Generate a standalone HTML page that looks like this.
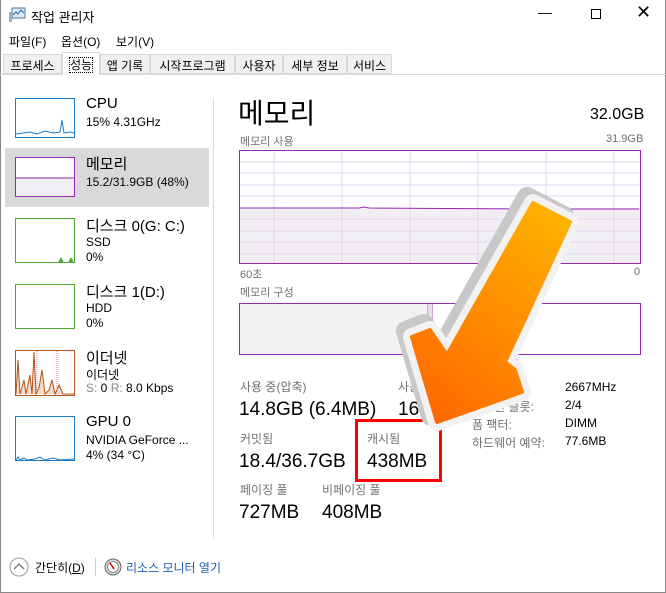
<!DOCTYPE html>
<html><head><meta charset="utf-8"><style>
*{margin:0;padding:0;box-sizing:border-box}
body{width:666px;height:593px;background:#fff;font-family:"Liberation Sans","Noto Sans CJK KR",sans-serif;position:relative;overflow:hidden;color:#000}
.a{position:absolute;white-space:nowrap}
.g{color:#707070;font-size:12px}
.v{font-size:19px}
.tab{position:absolute;top:54px;height:20px;border:1px solid #d9d9d9;background:#f0f0f0;font-size:12px;padding:2px 0;text-align:center;white-space:nowrap;overflow:hidden}
</style></head><body>
<div class="a" style="left:0;top:0;width:666px;height:593px;border:1px solid #888;border-top:none"></div>
<svg class="a" style="left:8px;top:7px" width="18" height="16"><rect x="4" y="1" width="13" height="10" fill="#dde8f3" stroke="#4a7aa6"/><polyline points="5,8 8,5 10,7 13,3 16,6" fill="none" stroke="#1e6fb8"/><rect x="1" y="5" width="3" height="10" fill="#aaa"/></svg>
<div class="a" style="left:31px;top:7px;font-size:13px">작업 관리자</div>
<div class="a" style="left:538px;top:4px;font-size:14px">—</div>
<div class="a" style="left:591px;top:9px;width:10px;height:10px;border:1px solid #000"></div>
<div class="a" style="left:636px;top:2px;font-size:18px">✕</div>
<div class="a" style="left:9px;top:33px;font-size:12px">파일(F)</div>
<div class="a" style="left:61px;top:33px;font-size:12px">옵션(O)</div>
<div class="a" style="left:116px;top:33px;font-size:12px">보기(V)</div>
<div class="a" style="left:0;top:74px;width:666px;border-top:1px solid #d9d9d9"></div>
<div class="tab" style="left:3px;width:59px">프로세스</div>
<div class="tab" style="left:62px;width:38px;top:52px;height:23px;background:#fff;border-bottom:none;padding-top:3px"><span style="outline:1px dotted #000">성능</span></div>
<div class="tab" style="left:100px;width:50px">앱 기록</div>
<div class="tab" style="left:150px;width:85px">시작프로그램</div>
<div class="tab" style="left:235px;width:48px">사용자</div>
<div class="tab" style="left:283px;width:64px">세부 정보</div>
<div class="tab" style="left:347px;width:45px">서비스</div>
<div class="a" style="left:213px;top:98px;height:440px;border-left:1px solid #ddd"></div>
<div class="a" style="left:5px;top:148px;width:204px;height:59px;background:#d9d9d9"></div>
<svg class="a" style="left:15px;top:98px" width="62" height="41"><rect x="0.5" y="0.5" width="59" height="39" fill="#fff" stroke="#1a7bc4"/><polyline points="1,36 8,35 15,34 22,36 30,33 38,35 45,34 47,22 49,35 55,34 59,35" fill="none" stroke="#1a7bc4"/></svg>
<div class="a" style="left:86px;top:95px;font-size:15px">CPU</div>
<div class="a" style="left:86px;top:115px;font-size:12px">15% 4.31GHz</div>
<svg class="a" style="left:15px;top:157px" width="62" height="41"><rect x="0.5" y="0.5" width="59" height="39" fill="#fff" stroke="#9528b4"/><rect x="1" y="21" width="58" height="18" fill="#f1eef4"/><line x1="1" y1="21" x2="59" y2="21" stroke="#9528b4"/></svg>
<div class="a" style="left:86px;top:153px;font-size:15px">메모리</div>
<div class="a" style="left:86px;top:175px;font-size:12px">15.2/31.9GB (48%)</div>
<svg class="a" style="left:15px;top:218px" width="62" height="46"><rect x="0.5" y="0.5" width="59" height="44" fill="#fff" stroke="#4ea72e"/><path d="M44,44 l2,-4 2,4 M54,44 l2,-4 2,4" fill="#4ea72e" stroke="#4ea72e"/></svg>
<div class="a" style="left:86px;top:215px;font-size:15px">디스크 0(G: C:)</div>
<div class="a" style="left:86px;top:235px;font-size:12px">SSD</div>
<div class="a" style="left:86px;top:250px;font-size:12px">0%</div>
<div class="a" style="left:15px;top:284px;width:60px;height:45px;border:1px solid #4ea72e"></div>
<div class="a" style="left:86px;top:281px;font-size:15px">디스크 1(D:)</div>
<div class="a" style="left:86px;top:301px;font-size:12px">HDD</div>
<div class="a" style="left:86px;top:316px;font-size:12px">0%</div>
<svg class="a" style="left:15px;top:350px" width="62" height="46"><rect x="0.5" y="0.5" width="59" height="45" fill="#fff" stroke="#b5531a"/><polyline points="1,44 3,10 5,44 9,30 11,44 15,25 17,44 19,2 21,44 24,38 27,20 30,44 34,40 37,30 40,44 44,35 48,44 52,44 59,44" fill="#f2dccc" stroke="#b5531a"/><line x1="22" y1="1" x2="22" y2="45" stroke="#d77" stroke-dasharray="1,1"/><line x1="42" y1="1" x2="42" y2="45" stroke="#d77" stroke-dasharray="1,1"/></svg>
<div class="a" style="left:86px;top:347px;font-size:15px">이더넷</div>
<div class="a" style="left:86px;top:366px;font-size:12px">이더넷</div>
<div class="a" style="left:86px;top:381px;font-size:12px"><span style="color:#888">S:</span> 0 <span style="color:#888">R:</span> 8.0 Kbps</div>
<svg class="a" style="left:15px;top:416px" width="62" height="46"><rect x="0.5" y="0.5" width="59" height="44" fill="#fff" stroke="#1a7bc4"/><polyline points="1,44 3,41 5,44 9,42 12,44 20,43 25,41 30,44 38,42 45,44 59,43" fill="none" stroke="#1a7bc4"/></svg>
<div class="a" style="left:86px;top:413px;font-size:15px">GPU 0</div>
<div class="a" style="left:86px;top:433px;font-size:12px">NVIDIA GeForce ...</div>
<div class="a" style="left:86px;top:448px;font-size:12px">4% (34 °C)</div>
<div class="a" style="left:238px;top:92px;font-size:28px">메모리</div>
<div class="a" style="left:590px;top:106px;font-size:16px">32.0GB</div>
<div class="a g" style="left:240px;top:133px;font-size:11px">메모리 사용</div>
<div class="a g" style="left:606px;top:133px;font-size:11px">31.9GB</div>
<svg class="a" style="left:239px;top:150px" width="403" height="115">
<rect x="1" y="58" width="400" height="55" fill="#f2eff4"/>
<g stroke="#e4d3ec" stroke-width="1">
<line x1="1" y1="12" x2="401" y2="12"/><line x1="1" y1="23" x2="401" y2="23"/><line x1="1" y1="35" x2="401" y2="35"/><line x1="1" y1="46" x2="401" y2="46"/><line x1="1" y1="69" x2="401" y2="69"/><line x1="1" y1="81" x2="401" y2="81"/><line x1="1" y1="92" x2="401" y2="92"/><line x1="1" y1="104" x2="401" y2="104"/>
<line x1="35" y1="1" x2="35" y2="113"/><line x1="103" y1="1" x2="103" y2="113"/><line x1="171" y1="1" x2="171" y2="113"/><line x1="239" y1="1" x2="239" y2="113"/><line x1="307" y1="1" x2="307" y2="113"/><line x1="375" y1="1" x2="375" y2="113"/>
</g>
<polyline points="1,58 120,58 125,57 130,58 300,59 400,59" fill="none" stroke="#9528b4"/>
<rect x="0.5" y="0.5" width="401" height="113" fill="none" stroke="#9528b4"/>
</svg>
<div class="a g" style="left:240px;top:266px;font-size:11px">60초</div>
<div class="a g" style="left:634px;top:266px;font-size:11px">0</div>
<div class="a g" style="left:240px;top:284px;font-size:11px">메모리 구성</div>
<div class="a" style="left:239px;top:303px;width:402px;height:52px;border:1px solid #9528b4"></div>
<div class="a" style="left:240px;top:304px;width:187px;height:50px;background:#f2f2f5"></div>
<div class="a" style="left:427px;top:304px;width:6px;height:50px;background:#eadcf0;border-left:1px solid #c9a6d8;border-right:1px solid #c9a6d8"></div>
<div class="a g" style="left:240px;top:378px">사용 중(압축)</div>
<div class="a v" style="left:239px;top:399px">14.8GB (6.4MB)</div>
<div class="a g" style="left:398px;top:378px">사용</div>
<div class="a v" style="left:398px;top:399px">16.</div>
<div class="a g" style="left:240px;top:430px">커밋됨</div>
<div class="a v" style="left:239px;top:451px">18.4/36.7GB</div>
<div class="a g" style="left:367px;top:430px">캐시됨</div>
<div class="a v" style="left:367px;top:451px">438MB</div>
<div class="a g" style="left:240px;top:481px">페이징 풀</div>
<div class="a v" style="left:239px;top:502px">727MB</div>
<div class="a g" style="left:322px;top:481px">비페이징 풀</div>
<div class="a v" style="left:322px;top:502px">408MB</div>
<div class="a g" style="left:472px;top:398px">사용된 슬롯:</div>
<div class="a g" style="left:472px;top:416px">폼 팩터:</div>
<div class="a g" style="left:472px;top:434px">하드웨어 예약:</div>
<div class="a" style="left:565px;top:380px;font-size:12px">2667MHz</div>
<div class="a" style="left:565px;top:398px;font-size:12px">2/4</div>
<div class="a" style="left:565px;top:416px;font-size:12px">DIMM</div>
<div class="a" style="left:565px;top:434px;font-size:12px">77.6MB</div>
<div class="a" style="left:355px;top:419px;width:87px;height:63px;border:3px solid #f00"></div>
<svg class="a" style="left:0;top:0" width="666" height="593">
<defs><linearGradient id="og" x1="0.8" y1="0" x2="0.2" y2="1"><stop offset="0" stop-color="#ffb000"/><stop offset="1" stop-color="#ff6a00"/></linearGradient></defs>
<polygon points="533,203 570,222 505,362 515,370 522,392 437,422 412,337 430,330 447,355" fill="#c8c8c8" stroke="#c8c8c8" stroke-width="20" stroke-linejoin="round" transform="translate(-6,-6)"/>
<polygon points="533,203 570,222 505,362 515,370 522,392 437,422 412,337 430,330 447,355" fill="#f2f2f2" stroke="#f2f2f2" stroke-width="18" stroke-linejoin="round"/>
<polygon points="533,203 570,222 505,362 515,370 522,392 437,422 412,337 430,330 447,355" fill="url(#og)" stroke="url(#og)" stroke-width="4" stroke-linejoin="round"/>
</svg>
<svg class="a" style="left:9px;top:557px" width="20" height="20"><circle cx="10" cy="10" r="9" fill="none" stroke="#999"/><polyline points="5,12 10,7 15,12" fill="none" stroke="#777" stroke-width="1.3"/></svg>
<div class="a" style="left:35px;top:559px;font-size:12px">간단히(<u>D</u>)</div>
<div class="a" style="left:95px;top:558px;height:18px;border-left:1px solid #ccc"></div>
<svg class="a" style="left:104px;top:558px" width="18" height="18"><circle cx="9" cy="9" r="8" fill="#ddd" stroke="#666"/><circle cx="9" cy="9" r="5.5" fill="#fff" stroke="#888"/><line x1="6" y1="5" x2="10" y2="11" stroke="#c00" stroke-width="1.5"/></svg>
<div class="a" style="left:126px;top:559px;font-size:12px;color:#1a5fb4">리소스 모니터 열기</div>
</body></html>
